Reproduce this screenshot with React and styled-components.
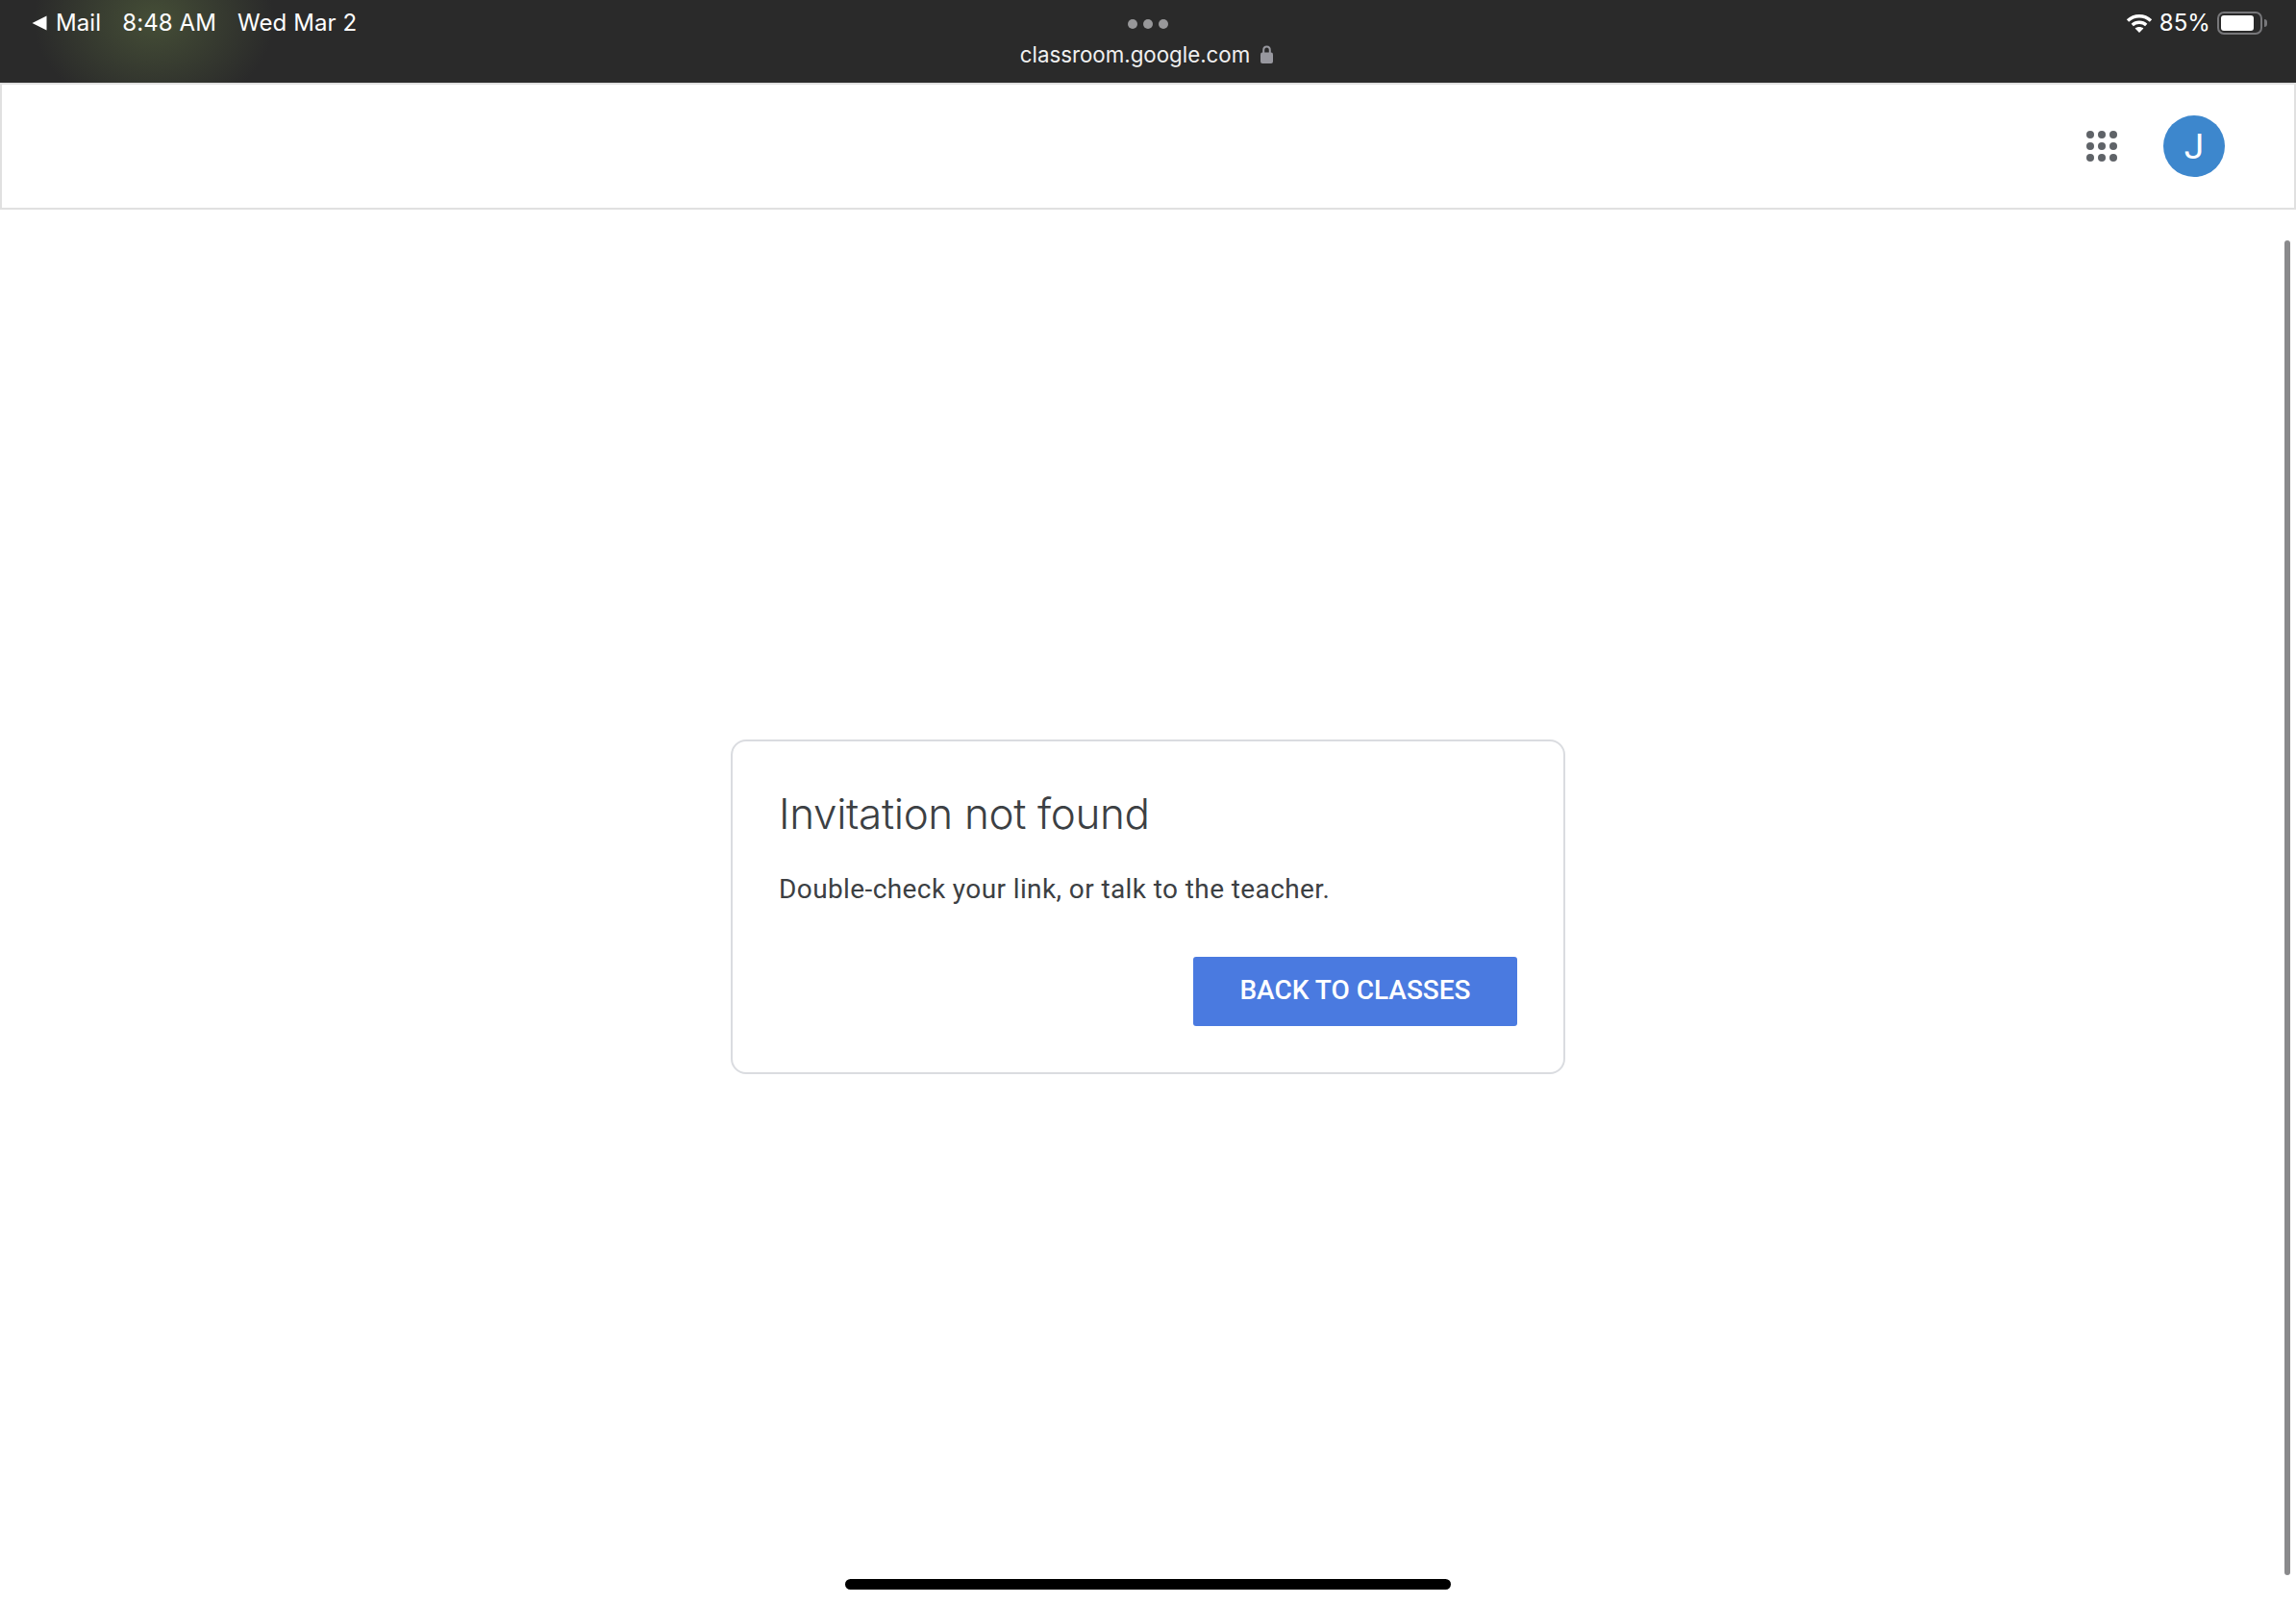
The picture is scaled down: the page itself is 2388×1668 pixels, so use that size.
import React from 'react';
import styled, {createGlobalStyle} from 'styled-components';

const GlobalStyle = createGlobalStyle`
    html, body {
        margin: 0;
        padding: 0;
        background: #ffffff;
    }
    body {
        font-family: "Roboto", "Liberation Sans", sans-serif;
    }
`

const Page = styled.div`
    position: relative;
    display: flex;
    flex-direction: column;
    width: 2388px;
    height: 1668px;
    overflow: hidden;
`

const StatusBar = styled.div`
    position: relative;
    flex: 0 0 86px;
    display: flex;
    justify-content: space-between;
    align-items: flex-start;
    padding: 0 30px 0 33px;
    box-sizing: border-box;
    color: #ffffff;
    font-family: "Inter", "Liberation Sans", sans-serif;
    font-size: 24px;
    letter-spacing: 0.1px;
    background:
        radial-gradient(ellipse 125px 100px at 160px 20px, rgba(72, 82, 56, 0.9), rgba(72, 82, 56, 0) 100%),
        #2a2a2a;
`

const StatusGroup = styled.div`
    display: flex;
    align-items: center;
    height: 47px;
    gap: ${props => props.gap}px;
`

const BackLink = styled.div`
    display: flex;
    align-items: center;
    gap: 9px;
`

const UrlBlock = styled.div`
    position: absolute;
    top: 0;
    left: 0;
    right: 0;
    display: flex;
    flex-direction: column;
    align-items: center;
`

const Dots = styled.div`
    display: flex;
    gap: 6px;
    margin-top: 20px;
`

const Dot = styled.span`
    width: 10px;
    height: 10px;
    border-radius: 50%;
    background: #98989a;
`

const UrlRow = styled.div`
    display: flex;
    align-items: center;
    gap: 11px;
    margin: 13px 3px 0 0;
    font-size: 22.3px;
    letter-spacing: 0;
    color: #f0f0f0;
`

const BatteryShell = styled.div`
    display: flex;
    align-items: center;
    width: 47px;
    height: 24px;
    padding: 2px;
    box-sizing: border-box;
    border: 2px solid #77777a;
    border-radius: 7px;
`

const BatteryFill = styled.div`
    width: 87%;
    height: 100%;
    border-radius: 3px;
    background: #ffffff;
`

const BatteryCap = styled.div`
    width: 3px;
    height: 8px;
    margin-left: -5px;
    border-radius: 0 3px 3px 0;
    background: #77777a;
`

const Header = styled.header`
    flex: 0 0 132px;
    display: flex;
    justify-content: flex-end;
    align-items: center;
    gap: 48px;
    padding-right: 72px;
    box-sizing: border-box;
    background: #ffffff;
    border: 2px solid #e0e0e0;
`

const AppsGrid = styled.div`
    display: grid;
    grid-template-columns: repeat(3, 8px);
    gap: 4px;
`

const AppsDot = styled.span`
    width: 8px;
    height: 8px;
    border-radius: 50%;
    background: #5f6368;
`

const Avatar = styled.div`
    width: 64px;
    height: 64px;
    display: flex;
    align-items: center;
    justify-content: center;
    border-radius: 50%;
    background: #3d87cd;
    color: #ffffff;
    font-size: 37px;
`

const Main = styled.main`
    flex: 1;
    display: flex;
    align-items: center;
    justify-content: center;
`

const Card = styled.section`
    width: 868px;
    height: 348px;
    box-sizing: border-box;
    padding: 48px;
    display: flex;
    flex-direction: column;
    background: #ffffff;
    border: 2px solid #dadce0;
    border-radius: 16px;
`

const Title = styled.h1`
    margin: 0;
    font-family: "Inter", "Liberation Sans", sans-serif;
    font-size: 44px;
    line-height: 54px;
    font-weight: 300;
    letter-spacing: -0.35px;
    color: #3c4043;
`

const Message = styled.p`
    margin: 34px 0 0;
    font-size: 28px;
    line-height: 36px;
    letter-spacing: 0.4px;
    color: #3c4043;
`

const Actions = styled.div`
    margin-top: auto;
    display: flex;
    justify-content: flex-end;
`

const PrimaryButton = styled.button`
    width: 337px;
    height: 72px;
    padding: 0 0 4px;
    border: 0;
    border-radius: 3px;
    background: #4a7ae0;
    color: #ffffff;
    font-family: "Roboto", "Liberation Sans", sans-serif;
    font-size: 28px;
    font-weight: 500;
`

const ScrollThumb = styled.div`
    position: absolute;
    top: 250px;
    right: 6px;
    width: 6px;
    height: 1388px;
    border-radius: 3px;
    background: #8a8a8c;
`

const HomeIndicator = styled.div`
    position: absolute;
    left: 879px;
    bottom: 15px;
    width: 630px;
    height: 11px;
    border-radius: 6px;
    background: #000000;
`

function WifiIcon() {
    return (
        <svg width="28" height="22" viewBox="0 0 28 22" fill="none" stroke="#ffffff" strokeWidth="3.4">
            <path d="M2 8.5C8.8 2.2 19.2 2.2 26 8.5" />
            <path d="M6.8 13C10.8 9.4 17.2 9.4 21.2 13" />
            <path d="M14 21L9.6 16.6C12 14.6 16 14.6 18.4 16.6Z" fill="#ffffff" stroke="none" />
        </svg>
    );
}

function LockIcon() {
    return (
        <svg width="13" height="19" viewBox="0 0 13 19">
            <path d="M3.2 8V5.2C3.2 3 4.5 1.6 6.5 1.6S9.8 3 9.8 5.2V8" fill="none" stroke="#98989f" strokeWidth="2" />
            <rect x="0" y="7.5" width="13" height="11.5" rx="2" fill="#98989f" />
        </svg>
    );
}

function App() {
    return (
        <Page>
            <GlobalStyle />
            <StatusBar>
                <StatusGroup gap={22}>
                    <BackLink>
                        <svg width="16" height="16" viewBox="0 0 16 16">
                            <path d="M0.5 8L15.5 0.5V15.5Z" fill="#ffffff" />
                        </svg>
                        <span>Mail</span>
                    </BackLink>
                    <span>8:48 AM</span>
                    <span>Wed Mar 2</span>
                </StatusGroup>
                <UrlBlock>
                    <Dots>
                        <Dot />
                        <Dot />
                        <Dot />
                    </Dots>
                    <UrlRow>
                        <span>classroom.google.com</span>
                        <LockIcon />
                    </UrlRow>
                </UrlBlock>
                <StatusGroup gap={7}>
                    <WifiIcon />
                    <span>85%</span>
                    <BatteryShell>
                        <BatteryFill />
                    </BatteryShell>
                    <BatteryCap />
                </StatusGroup>
            </StatusBar>
            <Header>
                <AppsGrid>
                    {Array.from({length: 9}).map((_, i) => <AppsDot key={'dot' + i} />)}
                </AppsGrid>
                <Avatar>J</Avatar>
            </Header>
            <Main>
                <Card>
                    <Title>Invitation not found</Title>
                    <Message>Double-check your link, or talk to the teacher.</Message>
                    <Actions>
                        <PrimaryButton>BACK TO CLASSES</PrimaryButton>
                    </Actions>
                </Card>
            </Main>
            <ScrollThumb />
            <HomeIndicator />
        </Page>
    );
}

export default App;
